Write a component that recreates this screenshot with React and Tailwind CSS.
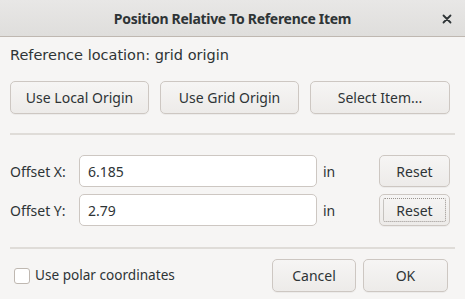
export default function App() {
  const btn =
    "flex items-center justify-center rounded-[5px] border border-[#cdc7c2] bg-gradient-to-b from-[#f6f5f4] to-[#edebe9] text-[#2e3436] text-[14px] shadow-[0_1px_0_rgba(0,0,0,0.04)]";
  const sans = { fontFamily: '"Noto Sans", "DejaVu Sans", sans-serif' };
  return (
    <div className="w-[465px] h-[299px] bg-[#f6f5f4] flex flex-col overflow-hidden" style={sans}>
      {/* Title bar */}
      <div className="h-[37px] shrink-0 flex items-center justify-center relative bg-gradient-to-b from-[#e8e7e6] to-[#dfdedc] border-b border-[#bfb8b1]">
        <span className="font-bold text-[14px] tracking-[-0.3px] text-[#2e3436]">Position Relative To Reference Item</span>
        <svg className="absolute left-[442px] top-[14px]" width="10" height="10" viewBox="0 0 10 10">
          <path d="M1.5 1.5 L8.5 8.5 M8.5 1.5 L1.5 8.5" stroke="#2e3436" strokeWidth="1.8" strokeLinecap="round" />
        </svg>
      </div>
      <div className="flex flex-col px-[10px]">
        <div className="h-[36px] flex items-center pt-[2px] text-[14.5px] text-[#2e3436]" style={{ fontFamily: '"DejaVu Sans", sans-serif' }}>
          Reference location: grid origin
        </div>
        <div className="flex gap-[11px] mt-[8px]">
          <div className={btn + " w-[139px] h-[33px]"}>Use Local Origin</div>
          <div className={btn + " w-[139px] h-[33px]"}>Use Grid Origin</div>
          <div className={btn + " w-[140px] h-[33px]"}>Select Item...</div>
        </div>
        <div className="mt-[19px] h-[2px] w-[445px] bg-[#dfdcd8]" />
        <div className="flex items-center mt-[20px] h-[32px]">
          <span className="w-[69px] text-[14px] text-[#2e3436]">Offset X:</span>
          <div className="w-[238px] h-[32px] rounded-[5px] border border-[#cdc7c2] bg-white flex items-center px-[8px] text-[14px] text-[#2e3436]">6.185</div>
          <span className="ml-[6px] w-[56px] text-[14px] text-[#2e3436]">in</span>
          <div className={btn + " w-[71px] h-[32px]"}>Reset</div>
        </div>
        <div className="flex items-center mt-[7px] h-[32px]">
          <span className="w-[69px] text-[14px] text-[#2e3436]">Offset Y:</span>
          <div className="w-[238px] h-[32px] rounded-[5px] border border-[#cdc7c2] bg-white flex items-center px-[8px] text-[14px] text-[#2e3436]">2.79</div>
          <span className="ml-[6px] w-[56px] text-[14px] text-[#2e3436]">in</span>
          <div className={btn + " w-[71px] h-[32px] p-[3px]"}>
            <div className="w-full h-full flex items-center justify-center border border-dotted border-[#9a9590] rounded-[2px]">Reset</div>
          </div>
        </div>
        <div className="mt-[21px] h-[2px] w-[445px] bg-[#dfdcd8]" />
        <div className="flex items-center mt-[10px] h-[33px]">
          <div className="ml-[4px] w-[16px] h-[16px] rounded-[3px] border border-[#bfb8b1] bg-white" />
          <span className="ml-[5px] text-[13.6px] text-[#2e3436]">Use polar coordinates</span>
          <div className="flex-1" />
          <div className={btn + " w-[84px] h-[33px]"}>Cancel</div>
          <div className={btn + " w-[85px] h-[33px] ml-[7px] mr-[7px]"}>OK</div>
        </div>
      </div>
    </div>
  );
}
